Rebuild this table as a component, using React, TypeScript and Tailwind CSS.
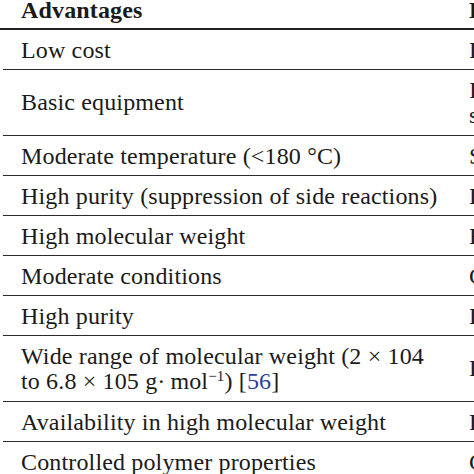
import React from "react"

type Row = {
  adv: React.ReactNode
  dis: React.ReactNode
  tall?: boolean
}

const rows: Row[] = [
  { adv: "Low cost", dis: "Long reaction time" },
  {
    adv: "Basic equipment",
    dis: (
      <>
        Impurities from
        <br />
        side reactions
      </>
    ),
    tall: true,
  },
  { adv: "Moderate temperature (<180 °C)", dis: "Slow kinetics" },
  { adv: "High purity (suppression of side reactions)", dis: "Low yield" },
  { adv: "High molecular weight", dis: "Expensive catalysts" },
  { adv: "Moderate conditions", dis: "Catalyst removal" },
  { adv: "High purity", dis: "Low productivity" },
  {
    adv: (
      <>
        Wide range of molecular weight (2 × 104
        <br />
        to 6.8 × 105 g·&#8201;mol
        <sup className="relative -top-[8px] align-baseline text-[15px] leading-none">−1</sup>) [
        <span className="text-[#2b3f9e]">56</span>]
      </>
    ),
    dis: "Limited scalability",
    tall: true,
  },
  { adv: "Availability in high molecular weight", dis: "Limited control" },
  { adv: "Controlled polymer properties", dis: "Complex process" },
]

export default function App() {
  return (
    <div className="w-[474px] h-[474px] overflow-hidden bg-white text-[#1a1a1a] font-['Liberation_Serif',serif] text-[24px] tracking-[0.15px]">
      <div className="flex h-[30px] border-b-2 border-[#222] font-bold leading-[21px]">
        <div className="w-[469px] shrink-0 pl-[21px]">Advantages</div>
        <div className="whitespace-nowrap">Disadvantages</div>
      </div>
      <div className="ml-[3px]">
        {rows.map((row, i) => (
          <div
            key={i}
            className={`flex items-center border-b border-[#2a2a2a] ${row.tall ? "h-[66px] leading-[25px]" : "h-[40px] leading-[26px]"}`}
          >
            <div className="w-[466px] shrink-0 pl-[18px]">{row.adv}</div>
            <div className="whitespace-nowrap">{row.dis}</div>
          </div>
        ))}
      </div>
    </div>
  )
}
